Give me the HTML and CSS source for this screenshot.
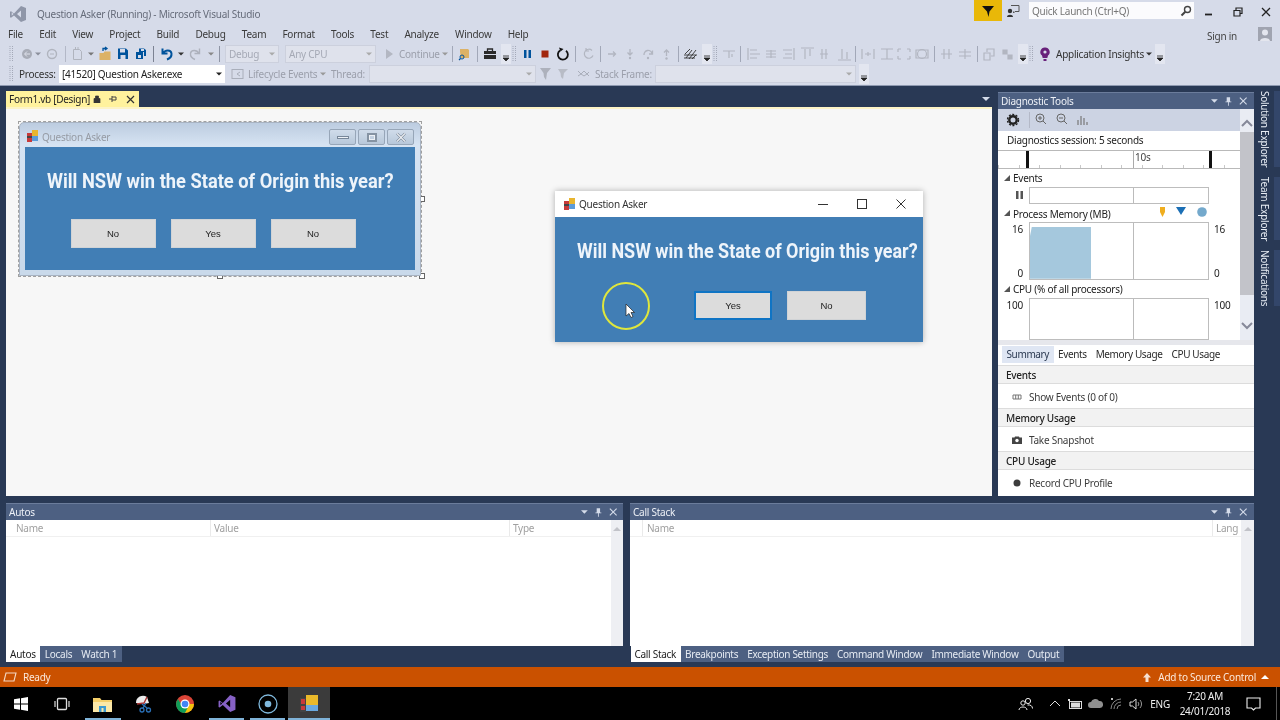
FILE: index.html
```html
<!DOCTYPE html>
<html lang="en">
<head>
<meta charset="utf-8">
<title>Question Asker (Running) - Microsoft Visual Studio</title>
<link rel="stylesheet" href="styles.css">
</head>
<body>
<svg class="defs" width="0" height="0">
  <defs>
    <path id="dd" d="M-3 -1.5h6l-3 3z"/>
    <g id="grip"><path d="M0 2V18M2.500 2V18" stroke="#a4a9b8" stroke-width="1" stroke-dasharray="1 1" fill="none"/></g>
    <g id="over"><rect x="-5" y="-10" width="10" height="20" fill="#e3e6f0"/><path d="M-3 2h6M-3 4h6l-3 3z" stroke="#222" stroke-width=".8" fill="#222"/></g>
    <g id="pin"><path d="M-2 -5h4v5h1.500v1h-3v4h-1v-4h-3v-1H-2z" fill="#d5dcea"/></g>
    <g id="cls"><path d="M-4 -4L4 4M4 -4L-4 4" stroke="#d5dcea" stroke-width="1.300"/></g>
    <path id="cr" d="M-4 -2h8l-4 4z" fill="#d5dcea"/>
    <g id="app"><rect x="0" y="3" width="5" height="9" fill="#c83a3a"/><rect x="5" y="0" width="6" height="6" fill="#e8b52e"/><rect x="5" y="6" width="6" height="5" fill="#5c9bd8"/><rect x="0" y="6" width="5" height="2" fill="#444"/></g>
  </defs>
</svg>
<div class="app">
  <header class="head">
    <div class="titlerow">
      <svg class="vslogo" width="18" height="18" viewBox="0 0 18 18"><path d="M12 1l5 2v12l-5 2-7-6.500-3 2.300-1-.6V6.800l1-.6 3 2.300zM12 5.500L8 9l4 3.500zM2.700 7.300v3.400L4.500 9z" fill="#8f96a8"/></svg>
      <span class="apptitle">Question Asker (Running) - Microsoft Visual Studio</span>
      <div class="filterbtn"><svg width="14" height="14" viewBox="0 0 14 14"><path d="M1 2h12L8.500 7.500 7.500 13 6 7.500z" fill="#111"/></svg></div>
      <svg class="feedback" width="14" height="14" viewBox="0 0 14 14"><circle cx="4" cy="7" r="2.200" fill="#333"/><path d="M1 13c0-3 6-3 6 0z" fill="#333"/><path d="M5 1.500h8v6H9l-1.500 1.500V7.500" fill="none" stroke="#555"/></svg>
      <div class="quick"><span>Quick Launch (Ctrl+Q)</span><svg width="12" height="12" viewBox="0 0 12 12"><circle cx="7.500" cy="4.500" r="3" fill="none" stroke="#444" stroke-width="1.400"/><path d="M5.300 6.700L1.500 10.500" stroke="#444" stroke-width="2"/></svg></div>
      <div class="winbtns">
        <svg width="10" height="10" viewBox="0 0 10 10"><path d="M1 7.500h7" stroke="#222" stroke-width="1.800"/></svg>
        <svg width="10" height="10" viewBox="0 0 10 10"><path d="M3 3V1h6v5.500H7M1 3.500h6V9H1z" fill="none" stroke="#222" stroke-width="1.200"/></svg>
        <svg width="10" height="10" viewBox="0 0 10 10"><path d="M1 1l8 8M9 1L1 9" stroke="#222" stroke-width="1.300"/></svg>
      </div>
    </div>
    <div class="menurow">
      <nav class="menu"><span>File</span><span>Edit</span><span>View</span><span>Project</span><span>Build</span><span>Debug</span><span>Team</span><span>Format</span><span>Tools</span><span>Test</span><span>Analyze</span><span>Window</span><span>Help</span></nav>
      <span class="signin">Sign in</span>
      <svg class="avatar" width="14" height="14" viewBox="0 0 14 14"><rect width="14" height="14" fill="#a0a4b0"/><circle cx="7" cy="5.500" r="3" fill="#e4e6ee"/><path d="M2 14c0-4 10-4 10 0z" fill="#e4e6ee"/></svg>
    </div>
    <div class="tbrow">
      <svg class="seg" width="217" height="20" viewBox="8 0 217 20">
        <use href="#grip" x="10"/>
        <circle cx="27" cy="10" r="5" fill="#a8acb7"/><path d="M30 10h-5M27 7.500L24.500 10l2.500 2.500" stroke="#dfe2ec" fill="none"/>
        <use href="#dd" x="38" y="10" fill="#8b8f9b"/>
        <circle cx="52" cy="10" r="4.500" fill="none" stroke="#b0b4be" stroke-width="1.400"/><path d="M50 10h4" stroke="#b0b4be"/>
        <path d="M65.500 2V18" stroke="#b3b8c7"/>
        <path d="M73.500 5.500h6l2 2v8h-8z" fill="none" stroke="#b0b4be"/><path d="M75.500 3v2M78 3v2" stroke="#b0b4be"/>
        <use href="#dd" x="91" y="10" fill="#777"/>
        <path d="M99.500 9h4l1-1.500h6v8.500h-11z" fill="#dcb266"/><path d="M103 7V4.500h3.500M105 3l2 1.500-2 1.500" stroke="#00539c" fill="none" stroke-width="1.300"/>
        <path d="M118 4.500h8l2 2v8.500h-10zM120 5v3.500h5V5M120.500 11h5v4h-5z" fill="#00539c" fill-rule="evenodd"/>
        <path d="M136 8h7v7h-7zM139 4.500h5l2 1.500v6h-2V8h-5z" fill="#00539c"/><rect x="138" y="11" width="3" height="3" fill="#d6dbe9"/><rect x="141" y="5" width="3" height="2" fill="#d6dbe9"/>
        <path d="M153.500 2V18" stroke="#7c8292"/>
        <path d="M162.500 4.500v5h5M163 9.500c2-4 8-4 8.500 0 .3 3-2 5-4.500 6" fill="none" stroke="#00539c" stroke-width="2"/>
        <use href="#dd" x="181" y="10" fill="#333"/>
        <path d="M199.500 4.500v5h-5M199 9.500c-2-4-8-4-8.500 0-.3 3 2 5 4.500 6" fill="none" stroke="#adb1bc" stroke-width="1.400"/>
        <use href="#dd" x="211" y="10" fill="#888"/>
        <path d="M219.500 2V18" stroke="#8f95a5"/>
      </svg>
      <div class="combo off c54"><span>Debug</span><svg width="6" height="4" viewBox="-3 -2 6 4"><use href="#dd" fill="#aaa"/></svg></div>
      <div class="combo off c91"><span>Any CPU</span><svg width="6" height="4" viewBox="-3 -2 6 4"><use href="#dd" fill="#aaa"/></svg></div>
      <svg class="seg" width="23" height="20" viewBox="376 0 23 20"><path d="M386 5l7 5-7 5z" fill="#b3b7c2"/></svg>
      <span class="tbtext off w40">Continue</span>
      <svg class="seg" width="613" height="20" viewBox="439 0 613 20">
        <use href="#dd" x="445" y="10" fill="#999"/>
        <path d="M452.500 2V18M477.500 2V18" stroke="#a2a8b8"/>
        <path d="M460 8V5h8l1 1v8h-8z" fill="#dcb266"/><circle cx="462" cy="13" r="2" fill="none" stroke="#00539c"/><path d="M460.500 14.500L459 16" stroke="#00539c" stroke-width="1.300"/>
        <path d="M484 7h12v8h-12z" fill="#2a2a2a"/><path d="M487.500 7V5h5v2" fill="none" stroke="#2a2a2a" stroke-width="1.300"/><path d="M484 10.500h12" stroke="#d6dbe9"/>
        <use href="#over" x="506" y="10"/><use href="#grip" x="513"/>
        <path d="M524 6h2.500v8H524zM528.500 6H531v8h-2.500z" fill="#00539c"/>
        <rect x="541.500" y="6.500" width="7" height="7" fill="#a1260d"/>
        <path d="M560 6.500a5 5 0 1 0 6 .2" fill="none" stroke="#111" stroke-width="1.800"/><path d="M559 3.500l1.500 4 3-2.500z" fill="#111"/>
        <path d="M575.500 2V18M600.500 2V18M678.500 2V18M740.500 2V18M855.500 2V18M934.500 2V18M977.500 2V18" stroke="#a2a8b8"/>
        <path d="M592 6.500a4.500 4.500 0 1 0 1 5M586 4v3h3" fill="none" stroke="#b2b6c1" stroke-width="1.200"/>
        <g fill="none" stroke="#b2b6c1" stroke-width="1.300"><path d="M608 10h7M613 7.500l2.500 2.500-2.500 2.500"/><path d="M630 5v6M627.500 8.500l2.500 2.500 2.500-2.500"/><path d="M644 11a4 4 0 0 1 8-1M652.500 6.500V10H649"/><path d="M666.500 12V6M664 8.500L666.500 6 669 8.500"/></g>
        <circle cx="630" cy="14" r="1.200" fill="#b2b6c1"/><circle cx="648" cy="14" r="1.200" fill="#b2b6c1"/><circle cx="666.500" cy="14.500" r="1.200" fill="#b2b6c1"/>
        <path d="M686 14l6-8M689 15l7-9M685 10l5-5M692 15l4-4M684 11h13M684 14h11" stroke="#333" stroke-width=".9" fill="none"/>
        <use href="#over" x="707" y="10"/><use href="#grip" x="714"/>
        <g fill="none" stroke="#b2b6c1" stroke-width="1.200">
          <path d="M723 7h12M729 7v7M732 10v3"/>
          <path d="M748 4v12M750 6h7M750 10h10M750 14h7"/>
          <path d="M766 7h10M766 10h10M766 13h10M771 6v8"/>
          <path d="M794 4v12M783 6h9M785 10h7M783 14h9"/>
          <path d="M801 4h13M805 5v10M810 5v7"/>
          <path d="M822 5v10M826 5v10M820 10h8"/>
          <path d="M838 16h13M842 5v10M847 8v7"/>
          <path d="M862 5v10M874 5v10M865 10h6M868 8v4"/>
          <path d="M881 5h12M887 5v10M881 15h12"/>
          <path d="M898 5h3M898 5v3M910 5h-3M910 5v3M898 15h3M898 15v-3M910 15h-3M910 15v-3"/>
          <circle cx="922" cy="10" r="4.500"/><path d="M916 6h12v8h-12z"/>
          <path d="M944 5v10M949 5v10M941 10h11"/>
          <path d="M959 8h12M959 12h12M965 5v10"/>
          <path d="M984 9h6v7h-6zM987 8V5h7v7h-3"/>
          <path d="M1003 6h4v4h-4zM1008 11h4v4h-4z" fill="#b2b6c1"/>
        </g>
        <use href="#over" x="1023" y="10"/><use href="#grip" x="1030"/>
        <path d="M1045 3.500a4.500 4.500 0 0 1 3 8l-.7 2.500h-4.600l-.7-2.500a4.500 4.500 0 0 1 3-8z" fill="#68217a"/><path d="M1043.500 15h3v2h-3z" fill="#68217a"/><circle cx="1045" cy="8" r="1.600" fill="#d6dbe9"/>
      </svg>
      <span class="tbtext w87">Application Insights</span>
      <svg class="seg" width="22" height="20" viewBox="1143 0 22 20"><use href="#dd" x="1149" y="10" fill="#333"/><use href="#over" x="1160" y="10"/></svg>
    </div>
    <div class="tbrow">
      <svg class="seg" width="11" height="20" viewBox="8 0 11 20"><use href="#grip" x="10"/></svg>
      <span class="tbtext w40">Process:</span>
      <div class="combo c166"><span>[41520] Question Asker.exe</span><svg width="6" height="4" viewBox="-3 -2 6 4"><use href="#dd" fill="#222"/></svg></div>
      <svg class="seg" width="23" height="20" viewBox="225 0 23 20"><rect x="232" y="5.500" width="11" height="9" fill="none" stroke="#a9aeba"/><path d="M240 8l-3 2 3 2" fill="none" stroke="#a9aeba"/></svg>
      <span class="tbtext off w68">Lifecycle Events</span>
      <svg class="seg" width="15" height="20" viewBox="316 0 15 20"><use href="#dd" x="323" y="10" fill="#999"/></svg>
      <span class="tbtext off w38">Thread:</span>
      <div class="combo off c167"><span></span><svg width="6" height="4" viewBox="-3 -2 6 4"><use href="#dd" fill="#aaa"/></svg></div>
      <svg class="seg" width="59" height="20" viewBox="536 0 59 20"><path d="M540 4h11l-4 5-1 7-2-3-.5-4z" fill="#adb1bc"/><path d="M558 5h10l-4 4-1 6-2-2-.5-4zM566 4l3 2" fill="#b8bcc6"/><path d="M578 7l3 3 3-3 3 3 2-2M578 12l3-2 3 2 3-2 2 2" fill="none" stroke="#a9aeba"/></svg>
      <span class="tbtext off w60">Stack Frame:</span>
      <div class="combo off c201"><span></span><svg width="6" height="4" viewBox="-3 -2 6 4"><use href="#dd" fill="#aaa"/></svg></div>
      <svg class="seg" width="14" height="20" viewBox="856 0 14 20"><use href="#over" x="864" y="10"/></svg>
    </div>
  </header>

  <main class="shell">
    <section class="doc">
      <div class="docstrip">
        <div class="doctab"><span>Form1.vb [Design]</span>
          <svg width="8" height="8" viewBox="0 0 8 8"><path d="M1 3.500h6V8H1zM2.500 3.500V1h3v2.500" fill="#333" stroke="#333" stroke-width=".7"/></svg>
          <svg width="9" height="9" viewBox="0 0 9 9"><path d="M3 1v6M3 2h4v3H3M0 4h3" fill="none" stroke="#444"/></svg>
          <svg width="9" height="9" viewBox="0 0 9 9"><path d="M1 1l7 7M8 1L1 8" stroke="#333" stroke-width="1.200"/></svg>
        </div>
        <svg class="doccaret" width="8" height="4" viewBox="-4 -2 8 4"><use href="#cr"/></svg>
      </div>
      <div class="canvas">
        <div class="selbox"><i class="handle h-e"></i><i class="handle h-s"></i><i class="handle h-se"></i></div>
        <div class="dform">
          <div class="dtitle">
            <svg width="11" height="12" viewBox="0 0 11 12"><use href="#app"/></svg><span class="dname">Question Asker</span>
            <div class="dbtns">
              <div class="dbtn"><i class="dmin"></i></div>
              <div class="dbtn"><i class="dmax"></i></div>
              <div class="dbtn"><svg width="12" height="11" viewBox="0 0 12 11"><path d="M2 1.500l8 8M10 1.500l-8 8" stroke="#6d7a8a" stroke-width="2.400"/><path d="M2 1.500l8 8M10 1.500l-8 8" stroke="#f1f3f7" stroke-width="1.100"/></svg></div>
            </div>
          </div>
          <div class="dclient">
            <h1 class="ask">Will NSW win the State of Origin this year?</h1>
            <div class="drow"><button class="wbtn">No</button><button class="wbtn">Yes</button><button class="wbtn">No</button></div>
          </div>
        </div>
        <div class="rform">
          <div class="rtitle">
            <svg width="11" height="12" viewBox="0 0 11 12"><use href="#app"/></svg><span class="rname">Question Asker</span>
            <svg class="rmin" width="10" height="10" viewBox="0 0 10 10"><path d="M0 5.500h10" stroke="#333"/></svg>
            <svg class="rmax" width="10" height="10" viewBox="0 0 10 10"><rect x=".5" y=".5" width="9" height="9" fill="none" stroke="#333"/></svg>
            <svg class="rcls" width="10" height="10" viewBox="0 0 10 10"><path d="M.5 .5l9 9M9.500 .5l-9 9" stroke="#333"/></svg>
          </div>
          <div class="rclient">
            <h1 class="ask ask-run">Will NSW win the State of Origin this year?</h1>
            <div class="rrow"><button class="wbtn rbtn focus">Yes</button><button class="wbtn rbtn">No</button></div>
          </div>
        </div>
        <svg class="cursorring" width="50" height="50" viewBox="0 0 50 50"><circle cx="25" cy="25" r="23" fill="none" stroke="#dfe63c" stroke-width="2"/><path d="M25 23v12l3-2.500 2 4 2-1-2-4h3.500z" fill="#fff" stroke="#222" stroke-width=".7"/></svg>
      </div>
    </section>

    <aside class="diag">
      <div class="ptitle"><span>Diagnostic Tools</span><div class="picons"><svg width="8" height="4" viewBox="-4 -2 8 4"><use href="#cr"/></svg><svg width="8" height="11" viewBox="-4 -5.500 8 11"><use href="#pin"/></svg><svg width="10" height="10" viewBox="-5 -5 10 10"><use href="#cls"/></svg></div></div>
      <div class="diagtop">
        <div class="diagmain">
          <div class="diagbar">
            <svg width="90" height="22" viewBox="0 0 90 22">
              <circle cx="15" cy="11" r="3.700" fill="none" stroke="#222" stroke-width="2.400"/><circle cx="15" cy="11" r="5.500" fill="none" stroke="#222" stroke-width="1.400" stroke-dasharray="2 1.500"/>
              <path d="M31.500 3V19" stroke="#b4b9c8"/>
              <circle cx="42" cy="9" r="4" fill="none" stroke="#666"/><path d="M45 12l3 3M40 9h4M42 7v4" stroke="#666"/>
              <circle cx="63" cy="9" r="4" fill="none" stroke="#666"/><path d="M66 12l3 3M61 9h4" stroke="#666"/>
              <path d="M80 16v-5M83 16V7M86 16v-7M89 16v-3" stroke="#777" stroke-width="1.200"/>
            </svg>
          </div>
          <div class="session">Diagnostics session: 5 seconds</div>
          <div class="ruler"><i class="mark m1"></i><i class="mark m2"></i><i class="rmid"></i><span>10s</span></div>
          <div class="gh"><i class="tri"></i>Events</div>
          <div class="grow r18"><span class="gl"><svg width="7" height="8" viewBox="0 0 7 8"><path d="M0 0h2.500v8H0zM4.500 0H7v8H4.500z" fill="#555"/></svg></span><div class="gbox"></div><span class="gr"></span></div>
          <div class="gh memh"><i class="tri"></i>Process Memory (MB)
            <svg class="legend" width="50" height="11" viewBox="0 0 50 11"><path d="M1 1h5v5l-2.500 5L1 6z" fill="#f0ae1f"/><path d="M17 1h10l-5 8z" fill="#1b6fb5"/><circle cx="43" cy="6" r="4.800" fill="#74a9cc"/></svg>
          </div>
          <div class="grow r57"><span class="gl col"><b>16</b><b>0</b></span><div class="gbox"><div class="mem"></div></div><span class="gr col"><b>16</b><b>0</b></span></div>
          <div class="gh"><i class="tri"></i>CPU (% of all processors)</div>
          <div class="grow r43"><span class="gl col"><b>100</b></span><div class="gbox"></div><span class="gr col"><b>100</b></span></div>
        </div>
        <div class="vscroll">
          <svg width="12" height="10" viewBox="0 0 12 10"><path d="M1 7l5-5 5 5" fill="none" stroke="#868999" stroke-width="2"/></svg>
          <div class="thumb"></div>
          <svg width="12" height="10" viewBox="0 0 12 10"><path d="M1 3l5 5 5-5" fill="none" stroke="#868999" stroke-width="2"/></svg>
        </div>
      </div>
      <div class="diagtabs"><span class="on">Summary</span><span>Events</span><span>Memory Usage</span><span>CPU Usage</span></div>
      <div class="sect">Events</div>
      <div class="act"><svg width="10" height="6" viewBox="0 0 10 6"><path d="M1 1h8v4H1zM3.700 1v4M6.300 1v4" fill="none" stroke="#777"/></svg><span>Show Events (0 of 0)</span></div>
      <div class="sect">Memory Usage</div>
      <div class="act"><svg width="10" height="8" viewBox="0 0 10 8"><path d="M0 1.500h2.500L3 .5h4l.5 1H10V8H0z" fill="#444"/><circle cx="5" cy="4.500" r="1.700" fill="#fff"/></svg><span>Take Snapshot</span></div>
      <div class="sect">CPU Usage</div>
      <div class="act last"><svg width="10" height="8" viewBox="0 0 10 8"><circle cx="5" cy="4" r="3.500" fill="#3c3c3c"/></svg><span>Record CPU Profile</span></div>
    </aside>

    <div class="sidetabs"><span class="st st1">Solution Explorer</span><span class="st st2">Team Explorer</span><span class="st st3">Notifications</span></div>

    <div class="bottom">
      <section class="bpanel left">
        <div class="ptitle"><span>Autos</span><div class="picons"><svg width="8" height="4" viewBox="-4 -2 8 4"><use href="#cr"/></svg><svg width="8" height="11" viewBox="-4 -5.500 8 11"><use href="#pin"/></svg><svg width="10" height="10" viewBox="-5 -5 10 10"><use href="#cls"/></svg></div></div>
        <div class="bbody">
          <div class="blist"><div class="cols"><span class="cname">Name</span><span class="cval">Value</span><span class="ctype">Type</span></div></div>
          <div class="bscroll"><svg width="10" height="6" viewBox="0 0 10 6"><path d="M1 5l4-4 4 4z" fill="#c2c3c9"/></svg></div>
        </div>
        <div class="btabs"><span class="on">Autos</span><span>Locals</span><span>Watch 1</span></div>
      </section>
      <section class="bpanel right">
        <div class="ptitle"><span>Call Stack</span><div class="picons"><svg width="8" height="4" viewBox="-4 -2 8 4"><use href="#cr"/></svg><svg width="8" height="11" viewBox="-4 -5.500 8 11"><use href="#pin"/></svg><svg width="10" height="10" viewBox="-5 -5 10 10"><use href="#cls"/></svg></div></div>
        <div class="bbody">
          <div class="blist"><div class="cols"><span class="cmark"></span><span class="cname2">Name</span><span class="clang">Lang</span></div></div>
          <div class="bscroll"><svg width="10" height="6" viewBox="0 0 10 6"><path d="M1 5l4-4 4 4z" fill="#c2c3c9"/></svg></div>
        </div>
        <div class="btabs"><span class="on">Call Stack</span><span>Breakpoints</span><span>Exception Settings</span><span>Command Window</span><span>Immediate Window</span><span>Output</span></div>
      </section>
    </div>
  </main>

  <footer class="status">
    <svg width="14" height="12" viewBox="0 0 14 12"><path d="M3 2h10l-2 8H1z" fill="none" stroke="#f3d8c4" stroke-width="1.100"/></svg>
    <span class="ready">Ready</span>
    <svg class="srcup" width="10" height="11" viewBox="0 0 10 11"><path d="M5 1l4 4.500H6.500V10h-3V5.500H1z" fill="#f6dfcf"/></svg>
    <span>Add to Source Control</span>
    <svg class="srccr" width="8" height="4" viewBox="0 0 8 4"><path d="M4 0l4 4H0z" fill="#fff"/></svg>
  </footer>

  <div class="taskbar">
    <div class="tasks">
      <div class="task"><svg width="14" height="14" viewBox="0 0 14 14"><path d="M0 2.200l6-.9V6.600H0zM7 1.200L14 0v6.600H7zM0 7.400h6v5.300l-6-.9zM7 7.400h7V14l-7-1.200z" fill="#fff"/></svg></div>
      <div class="task"><svg width="16" height="14" viewBox="0 0 16 14"><rect x="3.500" y="1.500" width="9" height="11" rx="1" fill="none" stroke="#ddd" stroke-width="1.300"/><path d="M1 4v6M15 4v6" stroke="#ddd" stroke-width="1.200"/></svg></div>
      <div class="task act1"><svg width="19" height="16" viewBox="0 0 19 16"><path d="M0 2h7l1.500 2H19v12H0z" fill="#f5cf6a"/><path d="M0 6h19v10H0z" fill="#fce8a7"/><path d="M6 10h7v6H6z" fill="#3d9ad1"/><path d="M8.500 12h2v4h-2z" fill="#fce8a7"/></svg></div>
      <div class="task"><svg width="20" height="18" viewBox="0 0 20 18"><path d="M2 8a7 7 0 0 1 11-6l2 6-5 1z" fill="#ececec"/><path d="M3 9l7-1 3-6" stroke="#a33" stroke-width="1.400" fill="none"/><path d="M8 9l5 4M12 8l-3 5" stroke="#2a6fb5" stroke-width="1.400"/><circle cx="8" cy="15" r="2" fill="none" stroke="#2a6fb5" stroke-width="1.300"/><circle cx="14.500" cy="15" r="2" fill="none" stroke="#2a6fb5" stroke-width="1.300"/></svg></div>
      <div class="task"><svg width="18" height="18" viewBox="0 0 18 18"><circle cx="9" cy="9" r="9" fill="#db4437"/><path d="M9 18a9 9 0 0 1-7.800-4.500L5 7l4 6 4.500 0L9 18z" fill="#0f9d58"/><path d="M9 18l4.500-9H18a9 9 0 0 1-9 9z" fill="#f4c20d"/><path d="M1.200 13.500A9 9 0 0 1 2 4l3.500 6z" fill="#0f9d58"/><circle cx="9" cy="9" r="4.500" fill="#fff"/><circle cx="9" cy="9" r="3.300" fill="#4285f4"/></svg></div>
      <div class="task act1"><svg width="20" height="19" viewBox="0 0 18 18"><path d="M12 1l5 2v12l-5 2-7-6.500-3 2.300-1-.6V6.800l1-.6 3 2.300zM12 5.500L8 9l4 3.500zM2.700 7.300v3.400L4.500 9z" fill="#8661c5"/></svg></div>
      <div class="task act1"><svg width="20" height="20" viewBox="0 0 20 20"><circle cx="10" cy="10" r="9" fill="none" stroke="#7fb8dc" stroke-width="1.300"/><circle cx="10" cy="10" r="3.300" fill="#7fb8dc"/></svg></div>
      <div class="task act1 cur"><svg width="18" height="17" viewBox="0 0 18 17"><rect x="0" y="3" width="6" height="14" fill="#444"/><rect x="1" y="4" width="4" height="5" fill="#c83a3a"/><rect x="1" y="11" width="4" height="4" fill="#c83a3a"/><rect x="6" y="0" width="12" height="10" fill="#eab92a"/><rect x="6" y="10" width="12" height="6" fill="#6aa9e0"/></svg></div>
    </div>
    <div class="tray">
      <svg class="tr-p" width="15" height="14" viewBox="0 0 15 14"><circle cx="10" cy="4" r="2.600" fill="none" stroke="#eee"/><circle cx="5" cy="6" r="2.200" fill="none" stroke="#eee"/><path d="M1 13c0-4 8-4 8 0M9.500 8c3-.5 5 1 5 3.500" fill="none" stroke="#eee"/></svg>
      <svg class="tr-c" width="12" height="7" viewBox="0 0 12 7"><path d="M1 6l5-5 5 5" fill="none" stroke="#ddd"/></svg>
      <svg class="tr-b" width="14" height="10" viewBox="0 0 14 10"><path d="M0 0h2v2H0z" fill="#ddd"/><rect x="1.500" y="2.500" width="12" height="7" fill="none" stroke="#ddd"/><rect x="3" y="3.500" width="9" height="5" fill="#ddd"/></svg>
      <svg class="tr-o" width="15" height="9" viewBox="0 0 15 9"><path d="M3 9a3 3 0 0 1 0-6 4.500 4.500 0 0 1 8-1 3.500 3.500 0 0 1 1 7z" fill="#8f8f8f"/></svg>
      <svg class="tr-w" width="14" height="13" viewBox="0 0 14 13"><path d="M2 12a10 10 0 0 1 10-10M5 12a7 7 0 0 1 7-7M8 12a4 4 0 0 1 4-4" fill="none" stroke="#888"/><path d="M2 2h2M3 1v2" stroke="#fff"/></svg>
      <svg class="tr-v" width="14" height="12" viewBox="0 0 14 12"><path d="M1 4h2.500L7 1v10L3.500 8H1z" fill="none" stroke="#ddd"/><path d="M9 4a3 3 0 0 1 0 4M11 2a6 6 0 0 1 0 8" fill="none" stroke="#999"/></svg>
      <span class="eng">ENG</span>
      <div class="clock"><span>7:20 AM</span><span>24/01/2018</span></div>
      <svg class="tr-n" width="15" height="14" viewBox="0 0 15 14"><path d="M1 1h13v10H9.500l-2 2-2-2H1z" fill="none" stroke="#eee" stroke-width="1.100"/></svg>
      <i class="showdesk"></i>
    </div>
  </div>
</div>
</body>
</html>
```
FILE: styles.css
```css
* { box-sizing: border-box; }
html, body { margin: 0; padding: 0; background: #000; }
body { font-family: "Noto Sans", "Open Sans", sans-serif; font-size: 10px; letter-spacing: -.25px; color: #1e1e1e; }
i { display: block; font-style: normal; }
.defs { position: absolute; }
.app { width: 1280px; height: 720px; display: flex; flex-direction: column; overflow: hidden; filter: blur(.3px); }

.head { height: 85px; background: #d6dbe9; flex: none; color: #3a3a3a; }
.titlerow { height: 28px; display: flex; align-items: flex-start; }
.vslogo { margin: 5px 0 0 9px; }
.apptitle { margin: 6px 0 0 10px; color: #666c7a; line-height: 16px; flex: 1; }
.filterbtn { width: 28px; height: 21px; background: #e9b808; display: flex; align-items: center; justify-content: center; }
.feedback { margin: 4px 0 0 4px; }
.quick { width: 165px; height: 17px; margin: 2px 0 0 9px; background: #fbfbfd; display: flex; align-items: center; justify-content: space-between; padding: 0 2px 0 3px; color: #777; }
.winbtns { width: 86px; display: flex; justify-content: space-between; padding: 7px 9px 0 10px; }
.menurow { height: 16px; margin-top: -1px; display: flex; align-items: flex-start; padding-left: 8px; }
.menu { display: flex; gap: 16.200px; flex: 1; line-height: 14px; }
.signin { margin: 2px 21px 0 0; line-height: 14px; color: #444; }
.avatar { margin: 0 8px 0 0; }
.tbrow { height: 20px; display: flex; align-items: center; padding-left: 8px; margin-top: 0; }
.menurow + .tbrow { margin-top: 1px; }
.seg { flex: none; display: block; }
.tbtext { line-height: 14px; white-space: nowrap; flex: none; color: #333; }
.tbtext.off { color: #9b9fab; }
.w40 { width: 40px; }
.w38 { width: 38px; }
.w60 { width: 60px; }
.w68 { width: 68px; }
.w87 { width: 87px; margin-left: 4px; }
.combo { height: 18px; flex: none; background: #fff; display: flex; align-items: center; justify-content: space-between; padding: 0 3px 0 3px; color: #222; white-space: nowrap; }
.combo.off { background: #dfe2ec; border: 1px solid #ccd0dd; color: #a5a9b5; }
.c54 { width: 54px; margin-right: 6px; }
.c91 { width: 91px; }
.c166 { width: 166px; }
.c167 { width: 167px; }
.c201 { width: 201px; }

.shell { flex: 1; background: #293955; display: grid; grid-template-columns: 986px 256px 26px; grid-template-rows: 405px 159px; column-gap: 6px; row-gap: 7px; padding: 5px 0 0 6px; border-top: 1px solid #8e99b0; align-content: start; }
.doc { display: flex; flex-direction: column; min-height: 0; }
.docstrip { height: 16px; display: flex; align-items: center; justify-content: space-between; padding-right: 2px; }
.doctab { width: 133px; height: 16px; background: #fff29d; display: flex; align-items: center; padding-left: 3px; color: #222; }
.doctab span { width: 84px; white-space: nowrap; letter-spacing: -.3px; }
.doctab svg { margin-right: 8px; }
.doctab svg:last-child { margin-right: 0; }
.canvas { flex: 1; position: relative; background: #f7f7f7; border-top: 2px solid #fdf4c7; }

.selbox { position: absolute; left: 12px; top: 12px; width: 404px; height: 156px; border: 1px dashed #a0a0a0; }
.handle { position: absolute; width: 6px; height: 6px; background: #fff; border: 1px solid #666; }
.h-e { left: 400px; top: 74px; }
.h-s { left: 198px; top: 151px; }
.h-se { left: 400px; top: 151px; }
.dform { position: absolute; left: 13px; top: 13px; width: 402px; height: 154px; border: 1px solid #a8b3c2; border-radius: 5px 5px 0 0; background: linear-gradient(#bccce0, #d6e3f2 22px, #c9d9ea); padding: 0 5px 5px; display: flex; flex-direction: column; }
.dtitle { height: 24px; display: flex; align-items: flex-start; padding: 7px 0 0 2px; }
.dname { margin: 0 0 0 4px; color: #969ba4; line-height: 14px; flex: 1; }
.dbtns { display: flex; gap: 2px; margin: -1px 1px 0 0; }
.dbtn { width: 27px; height: 16px; border: 1px solid #97a6b8; border-radius: 2px; background: linear-gradient(#d0dcea, #b8c8da); display: flex; align-items: center; justify-content: center; }
.dmin { width: 12px; height: 3px; background: #edf1f6; border: 1px solid #788799; }
.dmax { width: 10px; height: 9px; border: 2px solid #8593a3; box-shadow: 0 0 0 1px #edf1f6 inset; }
.dclient { flex: 1; background: #417eb5; display: flex; flex-direction: column; align-items: center; }
.ask { margin: 0; font-family: "Roboto", "Liberation Sans", sans-serif; font-weight: 700; font-size: 21px; letter-spacing: 0; line-height: 24px; color: #eef4fa; white-space: nowrap; transform: scaleX(.87); }
.dclient .ask { margin-top: 22px; }
.drow { display: flex; gap: 15px; margin: 26px 14px 0 0; }
.wbtn { width: 85px; height: 29px; background: #dcdcdc; border: 1px solid #d0d3d6; padding: 0; font-family: "Liberation Sans", sans-serif; font-size: 9.5px; letter-spacing: 0; color: #222; }
.rform { position: absolute; left: 549px; top: 82px; width: 368px; height: 151px; display: flex; flex-direction: column; box-shadow: 0 0 6px rgba(0,0,0,.3); }
.rtitle { height: 26px; background: #fff; display: flex; align-items: center; padding-left: 9px; position: relative; }
.rname { margin-left: 4px; color: #333; flex: 1; }
.rmin { margin-right: 29px; }
.rmax { margin-right: 29px; }
.rcls { margin-right: 17px; }
.rclient { flex: 1; background: #417eb5; display: flex; flex-direction: column; }
.ask-run { margin: 22px 0 0 22px; transform: scaleX(.855); transform-origin: left center; align-self: flex-start; }
.rrow { display: flex; gap: 15px; margin: 28px 0 0 139px; }
.rbtn { width: 79px; height: 29px; }
.focus { width: 78px; border: 2px solid #0f74c4; }
.cursorring { position: absolute; left: 595px; top: 172px; }

.diag { background: #fff; display: flex; flex-direction: column; margin-top: 1px; min-height: 0; }
.ptitle { height: 17px; flex: none; background: #4d6082; color: #eef1f7; display: flex; align-items: center; justify-content: space-between; padding: 0 7px 0 3px; border-top: 1px solid #6b7c9b; }
.left .ptitle { padding-right: 6px; }
.picons { display: flex; align-items: center; gap: 7px; width: 36px; justify-content: space-between; }
.diagtop { height: 231px; display: flex; flex: none; }
.diagmain { flex: 1; display: flex; flex-direction: column; }
.diagbar { height: 22px; background: #ccd3e3; }
.diagbar svg { display: block; }
.session { height: 19px; padding-left: 9px; line-height: 19px; color: #222; }
.ruler { height: 19px; position: relative; border-top: 1px solid #b9b9b9; border-bottom: 1px solid #b9b9b9; padding-left: 137px; line-height: 13px; color: #444; background: repeating-linear-gradient(90deg, #c8c8c8 0 1px, transparent 1px 20.500px) 0 100% / 100% 3px no-repeat; }
.mark { position: absolute; top: 0; width: 3px; height: 17px; background: #111; }
.m1 { left: 28px; }
.m2 { left: 211px; }
.rmid { position: absolute; left: 135px; top: 0; width: 1px; height: 17px; background: #aaa; }
.gh { height: 18px; line-height: 18px; padding-left: 15px; position: relative; color: #222; }
.memh { padding-top: 1px; }
.tri { position: absolute; left: 6px; top: 6px; width: 0; height: 0; border-style: solid; border-width: 0 0 6px 6px; border-color: transparent transparent #555 transparent; }
.legend { position: absolute; left: 161px; top: 2px; }
.grow { display: flex; }
.r18 { height: 18px; }
.r57 { height: 58px; }
.r43 { height: 43px; }
.gl { width: 31px; flex: none; display: flex; justify-content: flex-end; padding: 4px 6px 0 0; color: #222; }
.gr { flex: 1; padding: 0 0 0 5px; color: #222; }
.col { flex-direction: column; justify-content: space-between; padding-top: 0; padding-bottom: 0; display: flex; }
.col b { font-weight: 400; line-height: 14px; }
.gl.col { align-items: flex-end; }
.r43 .col { justify-content: flex-start; }
.gbox { width: 180px; flex: none; border: 1px solid #bdbdbd; position: relative; }
.gbox::after { content: ""; position: absolute; left: 103px; top: 0; bottom: 0; width: 1px; background: #bbb; }
.mem { position: absolute; left: 0; bottom: 0; width: 61px; height: 52px; background: #a5c8dd; clip-path: polygon(0 18%, 3% 0, 100% 0, 100% 100%, 0 100%); }
.vscroll { width: 14px; flex: none; background: #e9ecf3; display: flex; flex-direction: column; align-items: center; }
.vscroll svg:first-child { margin-top: 10px; }
.thumb { width: 14px; height: 163px; background: #c2c3c9; margin: 3px 0 25px; flex: none; }
.diagtabs { height: 25px; flex: none; border-top: 5px solid #e6e7ec; display: flex; padding: 1px 0 2px 4px; line-height: 17px; color: #2a2a2a; letter-spacing: -.38px; }
.diagtabs span { padding: 0 4.500px; }
.diagtabs .on { background: #dfe6f3; color: #2a3850; }
.sect { height: 19px; flex: none; background: #f2f2f2; line-height: 19px; padding-left: 8px; color: #222; font-weight: 500; border-bottom: 1px solid #dcdcdc; border-top: 1px solid #dcdcdc; }
.act { height: 24px; flex: none; display: flex; align-items: center; padding: 1px 0 0 14px; color: #3c3c3c; }
.act span { margin-left: 7px; }
.act.last { flex: 1; padding-top: 0; }

.sidetabs { grid-row: 1; grid-column: 3; display: flex; flex-direction: column; color: #e6ebf3; margin-left: -2px; }
.st { writing-mode: vertical-rl; line-height: 14px; white-space: nowrap; border-right: 6px solid #33466a; width: 22px; padding-right: 2px; }
.st1 { height: 76px; margin-bottom: 10px; }
.st2 { height: 63px; margin-bottom: 10px; }
.st3 { height: 56px; }

.bottom { grid-column: 1 / 3; grid-row: 2; display: flex; gap: 7px; width: 1248px; }
.bpanel { display: flex; flex-direction: column; }
.left { width: 617px; }
.right { width: 624px; }
.bbody { height: 126px; background: #fff; display: flex; }
.blist { flex: 1; }
.cols { height: 17px; border-bottom: 1px solid #f0f0f0; display: flex; color: #a0a0a0; line-height: 17px; }
.cols span { height: 16px; }
.cname { width: 205px; padding-left: 10px; border-right: 1px solid #eaeaea; }
.cval { width: 299px; padding-left: 3px; border-right: 1px solid #eaeaea; }
.ctype { padding-left: 3px; }
.cmark { width: 13px; border-right: 1px solid #eaeaea; }
.cname2 { width: 570px; padding-left: 4px; border-right: 1px solid #eaeaea; }
.clang { padding-left: 3px; width: 26px; overflow: hidden; }
.bscroll { width: 13px; background: #eeeff3; display: flex; justify-content: center; align-items: flex-start; padding-top: 6px; }
.left .bscroll { width: 12px; }
.btabs { height: 16px; display: flex; color: #e6ebf3; line-height: 16px; }
.btabs span { padding: 0 4.500px; background: #4d6082; }
.btabs .on { background: #fff; color: #1e1e1e; padding-left: 4px; }
.right .btabs { margin-left: 1px; letter-spacing: -.3px; }
.right .btabs .on { padding-left: 3.500px; }

.status { height: 20px; flex: none; background: #ca5100; color: #fbe8da; display: flex; align-items: center; padding-left: 3px; }
.ready { margin-left: 6px; flex: 1; }
.srcup { margin-right: 6px; }
.srccr { margin: 0 11px 0 5px; }

.taskbar { height: 33px; flex: none; background: #000; display: flex; justify-content: space-between; }
.tasks { display: flex; }
.task { width: 41.200px; height: 33px; display: flex; align-items: center; justify-content: center; position: relative; }
.act1::after { content: ""; position: absolute; left: 3px; right: 3px; bottom: 0; height: 2px; background: #7fb3d8; }
.cur { background: #3b3b3b; }
.cur::after { left: 0; right: 0; }
.tray { display: flex; align-items: center; color: #eee; }
.tray svg { flex: none; }
.tr-p { margin-right: 16px; }
.tr-c { margin-right: 7px; }
.tr-b { margin-right: 6px; }
.tr-o { margin-right: 6px; }
.tr-w { margin-right: 6px; }
.tr-v { margin-right: 7px; }
.eng { margin-right: 5px; }
.clock { width: 60px; display: flex; flex-direction: column; align-items: center; line-height: 15px; margin-right: 11px; }
.tr-n { margin-right: 15px; }
.showdesk { width: 1px; height: 33px; background: #555; margin-right: 3px; }
```
